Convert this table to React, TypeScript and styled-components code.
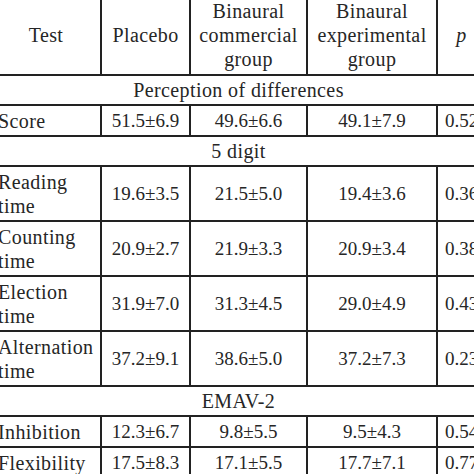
import React from "react";
import styled, {createGlobalStyle} from "styled-components";

const GlobalStyle = createGlobalStyle`
  html, body {
    margin: 0;
    padding: 0;
    background: #ffffff;
    overflow: hidden;
  }
  body {
    width: 474px;
    height: 474px;
  }
`;

const Page = styled.div`
  width: 474px;
  height: 474px;
  overflow: hidden;
`;

const Table = styled.div`
  display: grid;
  grid-template-columns: 108px 87px 115px 128px 47px;
  gap: 2px;
  width: max-content;
  margin: -6px 0 0 -10px;
  border: 2px solid #222222;
  background-color: #222222;
  color: #262626;
`;

const Cell = styled.div<{ $h: number }>`
  height: ${p => p.$h}px;
  background-color: #ffffff;
  display: flex;
  align-items: center;
  justify-content: center;
  text-align: center;
  font-family: "Liberation Serif", "DejaVu Serif", serif;
  font-size: 20px;
  line-height: 24px;
  letter-spacing: 0.4px;
  white-space: nowrap;
`;

const HeadCell = styled(Cell)``;

const LabelCell = styled(Cell)`
  justify-content: flex-start;
  text-align: left;
  padding-left: 6px;
`;

const ValueCell = styled(Cell)`
  font-size: 19px;
  letter-spacing: 0;
`;

const SectionCell = styled(Cell)`
  grid-column: 1 / -1;
`;

const Italic = styled.span`
  font-style: italic;
`;

interface DataRow {
    label: string[];
    values: string[];
    p: string;
}

interface Section {
    title: string;
    rows: DataRow[];
}

const sections: Section[] = [
    {
        title: "Perception of differences",
        rows: [
            {label: ["Score"], values: ["51.5±6.9", "49.6±6.6", "49.1±7.9"], p: "0.52"},
        ],
    },
    {
        title: "5 digit",
        rows: [
            {label: ["Reading", "time"], values: ["19.6±3.5", "21.5±5.0", "19.4±3.6"], p: "0.36"},
            {label: ["Counting", "time"], values: ["20.9±2.7", "21.9±3.3", "20.9±3.4"], p: "0.38"},
            {label: ["Election", "time"], values: ["31.9±7.0", "31.3±4.5", "29.0±4.9"], p: "0.43"},
            {label: ["Alternation", "time"], values: ["37.2±9.1", "38.6±5.0", "37.2±7.3"], p: "0.23"},
        ],
    },
    {
        title: "EMAV-2",
        rows: [
            {label: ["Inhibition"], values: ["12.3±6.7", "9.8±5.5", "9.5±4.3"], p: "0.54"},
            {label: ["Flexibility"], values: ["17.5±8.3", "17.1±5.5", "17.7±7.1"], p: "0.77"},
        ],
    },
];

const HEAD_H = 78;

const App: React.FC = () => {
    return (
        <Page>
            <GlobalStyle />
            <Table>
                <HeadCell $h={HEAD_H}>Test</HeadCell>
                <HeadCell $h={HEAD_H}>Placebo</HeadCell>
                <HeadCell $h={HEAD_H}>Binaural<br />commercial<br />group</HeadCell>
                <HeadCell $h={HEAD_H}>Binaural<br />experimental<br />group</HeadCell>
                <HeadCell $h={HEAD_H}><Italic>p</Italic></HeadCell>

                {sections.map(section => (
                    <React.Fragment key={section.title}>
                        <SectionCell $h={28}>{section.title}</SectionCell>
                        {section.rows.map(row => {
                            const h = row.label.length > 1 ? 53 : 29;
                            return (
                                <React.Fragment key={row.label.join(" ")}>
                                    <LabelCell $h={h}>
                                        <span>
                                            {row.label.map((line, i) => (
                                                <React.Fragment key={line}>
                                                    {i > 0 && <br />}
                                                    {line}
                                                </React.Fragment>
                                            ))}
                                        </span>
                                    </LabelCell>
                                    {row.values.map((v, i) => (
                                        <ValueCell $h={h} key={i}>{v}</ValueCell>
                                    ))}
                                    <ValueCell $h={h}>{row.p}</ValueCell>
                                </React.Fragment>
                            );
                        })}
                    </React.Fragment>
                ))}
            </Table>
        </Page>
    );
};

export default App;
